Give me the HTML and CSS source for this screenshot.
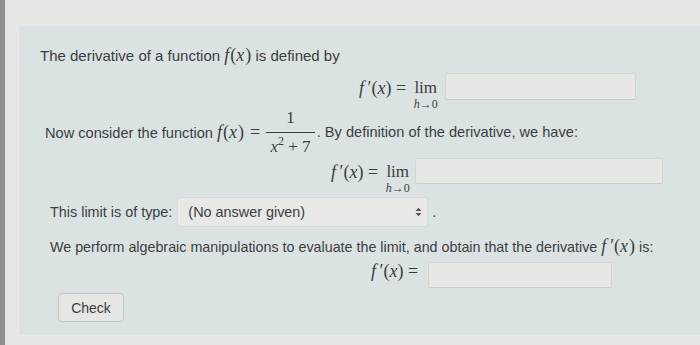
FILE: index.html
```html
<!DOCTYPE html>
<html>
<head>
<meta charset="utf-8">
<link rel="stylesheet" href="styles.css">
</head>
<body>
<div class="screen">
  <div class="panel">
    <p class="line l1">The derivative of a function <span class="m">f</span><span class="mu">(</span><span class="m">x</span><span class="mu">)</span> is defined by</p>
    <div class="formula f1">
      <span class="mx"><i>f</i>&#8201;′(<i>x</i>) = </span>
      <span class="lim">lim<span class="sub"><i>h</i>→0</span></span>
      <span class="input in1"></span>
    </div>
    <div class="line l2">
      <span>Now consider the function <span class="m">f</span><span class="mu">(</span><span class="m">x</span><span class="mu">)</span> <span class="mx">=</span></span>
      <span class="frac"><span class="num">1</span><span class="den"><i>x</i><sup>2</sup> + 7</span></span>
      <span>. By definition of the derivative, we have:</span>
    </div>
    <div class="formula f2">
      <span class="mx"><i>f</i>&#8201;′(<i>x</i>) = </span>
      <span class="lim">lim<span class="sub"><i>h</i>→0</span></span>
      <span class="input in2"></span>
    </div>
    <div class="line l3">
      <span>This limit is of type:</span>
      <span class="select"><span>(No answer given)</span>
        <svg class="arrows" width="7" height="10" viewBox="0 0 7 10"><path d="M0.5 4 L3.5 0.8 L6.5 4 Z M0.5 6 L3.5 9.2 L6.5 6 Z" fill="#555"/></svg>
      </span>
      <span class="dot">.</span>
    </div>
    <p class="line l4">We perform algebraic manipulations to evaluate the limit, and obtain that the derivative <span class="m">f</span>&#8201;<span class="mu">′(</span><span class="m">x</span><span class="mu">)</span> is:</p>
    <div class="formula f3">
      <span class="mx"><i>f</i>&#8201;′(<i>x</i>) = </span>
      <span class="input in3"></span>
    </div>
    <button class="check">Check</button>
  </div>
</div>
</body>
</html>
```
FILE: styles.css
```css
html, body {
  margin: 0;
  padding: 0;
  width: 700px;
  height: 345px;
  overflow: hidden;
  background: #e7e7e6;
}
.screen {
  height: 345px;
  border-left: 5px solid #8f8f8e;
  box-sizing: border-box;
  padding-top: 25px;
  padding-left: 13px;
  font-family: "Liberation Sans", Arial, sans-serif;
  color: #3b3d3f;
}
.panel {
  height: 311px;
  box-sizing: border-box;
  background: #dbe3e2;
  border: 1px solid #e6ebea;
  border-right: none;
  border-radius: 4px 0 0 4px;
  padding: 19px 0 0 21px;
  font-size: 15px;
}
.line { margin: 0; }
.m {
  font-family: "Liberation Serif", serif;
  font-style: italic;
  font-size: 18px;
  padding-right: 1px;
}
.mu {
  font-family: "Liberation Serif", serif;
  font-size: 18px;
}
.mx {
  font-family: "Liberation Serif", serif;
  font-size: 18px;
  line-height: 18px;
  white-space: pre;
}
.mx i { font-style: italic; }
.l1 { height: 20px; line-height: 20px; }
.formula {
  display: flex;
  align-items: flex-start;
  font-family: "Liberation Serif", serif;
}
.f1 { margin-left: 319px; margin-top: 14px; height: 29px; }
.lim {
  display: inline-flex;
  flex-direction: column;
  align-items: center;
  font-size: 17px;
  line-height: 18px;
  margin-left: 3px;
}
.sub {
  font-size: 12px;
  line-height: 11px;
  margin-top: 2px;
}
.sub i { font-style: italic; }
.input {
  display: block;
  background: #e7e8e5;
  border: 1px solid #d3d6d3;
  border-bottom-color: #c9ccc9;
  border-radius: 2px;
  box-sizing: border-box;
}
.in1 { width: 191px; height: 27px; margin-left: 7px; margin-top: -6px; }
.l2 {
  display: flex;
  align-items: center;
  margin-left: 5px;
  height: 48px;
  font-size: 14.6px;
}
.l2 .mx { margin-left: 2px; }
.frac {
  display: inline-flex;
  flex-direction: column;
  align-items: center;
  font-family: "Liberation Serif", serif;
  font-size: 17px;
  margin: 0 2px 0 6px;
  line-height: 20px;
}
.num {
  border-bottom: 1px solid #3b3d3f;
  padding: 0 20px 4px;
  align-self: stretch;
  text-align: center;
}
.den { padding: 4px 2px 0; }
.den i { font-style: italic; }
.den sup { font-size: 12px; line-height: 0; }
.f2 { margin-left: 291px; margin-top: 7px; height: 33px; }
.in2 { width: 248px; height: 26px; margin-left: 5px; margin-top: -5px; }
.l3 {
  display: flex;
  align-items: center;
  margin-left: 10px;
  height: 32px;
  font-size: 14.4px;
}
.select {
  display: flex;
  align-items: center;
  justify-content: space-between;
  width: 251px;
  height: 30px;
  box-sizing: border-box;
  margin-left: 5px;
  padding: 0 5px 0 10px;
  background: #e8e9e6;
  border: 1px solid #d8dad7;
  border-radius: 3px;
}
.dot { margin-left: 4px; }
.l4 { margin: 8px 0 0 10px; height: 20px; line-height: 20px; font-size: 14.3px; }
.f3 { margin-left: 331px; margin-top: 6px; height: 26px; }
.in3 { width: 184px; height: 26px; margin-left: 5px; }
.check {
  display: block;
  margin-left: 18px;
  margin-top: 5px;
  width: 66px;
  height: 29px;
  background: #e6e7e5;
  border: 1px solid #c4c6c4;
  border-radius: 4px;
  font-family: "Liberation Sans", Arial, sans-serif;
  font-size: 14px;
  color: #3b3d3f;
  padding: 0;
}
```
